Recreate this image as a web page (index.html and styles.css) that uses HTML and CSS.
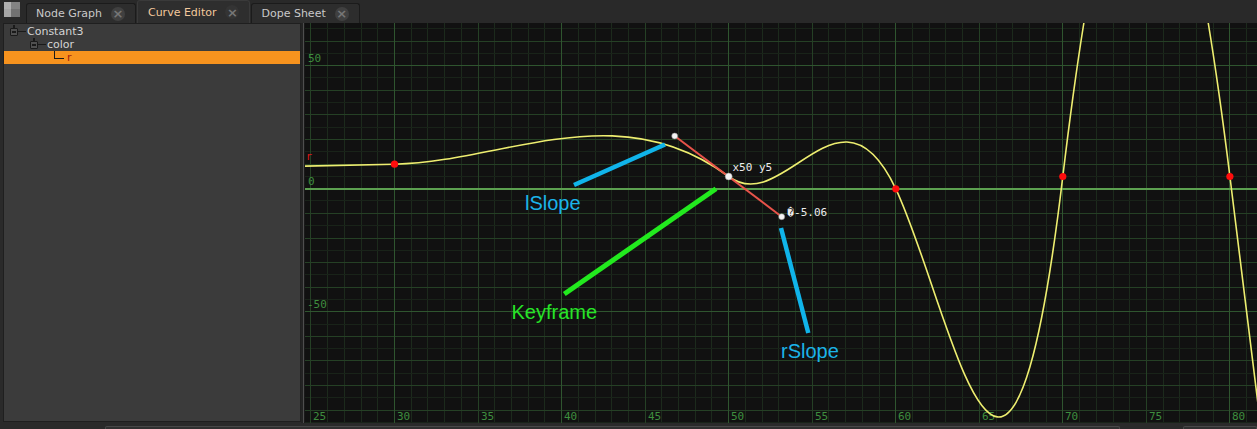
FILE: index.html
```html
<!DOCTYPE html>
<html lang="en">
<head>
<meta charset="UTF-8">
<title>Curve Editor</title>
<link rel="stylesheet" href="styles.css">
</head>
<body>
<div class="app">
    <div class="tabbar">
        <span class="pane-icon"></span>
        <div class="tab">Node Graph<span class="close">&times;</span></div>
        <div class="tab active">Curve Editor<span class="close">&times;</span></div>
        <div class="tab">Dope Sheet<span class="close">&times;</span></div>
    </div>

    <div class="workspace">
        <div class="tree">
            <div class="row l0"><span class="toggle"></span><span class="stem"></span>Constant3</div>
            <div class="row l1"><span class="toggle"></span><span class="stem"></span>color</div>
            <div class="row l2 selected"><span class="branch"></span>r</div>
        </div>
        <div class="splitter"></div>
        <div class="canvas">
            <svg class="graph" width="952" height="400" viewBox="305 23 952 400">
                <!-- grid: 1 frame / 5 value steps -->
                <path class="grid-minor" d="M327.5 23V423M344.5 23V423M361.5 23V423M377.5 23V423M411.5 23V423M427.5 23V423M444.5 23V423M461.5 23V423M494.5 23V423M511.5 23V423M528.5 23V423M544.5 23V423M578.5 23V423M595.5 23V423M611.5 23V423M628.5 23V423M661.5 23V423M678.5 23V423M695.5 23V423M711.5 23V423M745.5 23V423M762.5 23V423M778.5 23V423M795.5 23V423M828.5 23V423M845.5 23V423M862.5 23V423M879.5 23V423M912.5 23V423M929.5 23V423M945.5 23V423M962.5 23V423M996.5 23V423M1012.5 23V423M1029.5 23V423M1046.5 23V423M1079.5 23V423M1096.5 23V423M1113.5 23V423M1129.5 23V423M1163.5 23V423M1179.5 23V423M1196.5 23V423M1213.5 23V423M1246.5 23V423"/>
                <path class="grid-faint" d="M305 28.5H1257M305 53.5H1257M305 77.5H1257M305 102.5H1257M305 127.5H1257M305 151.5H1257M305 176.5H1257M305 200.5H1257M305 225.5H1257M305 250.5H1257M305 274.5H1257M305 299.5H1257M305 324.5H1257M305 348.5H1257M305 373.5H1257M305 397.5H1257M305 422.5H1257"/>
                <path class="grid-mid" d="M310.5 23V423M478.5 23V423M645.5 23V423M812.5 23V423M979.5 23V423M1146.5 23V423M305 41.5H1257M305 90.5H1257M305 114.5H1257M305 139.5H1257M305 164.5H1257M305 213.5H1257M305 238.5H1257M305 262.5H1257M305 287.5H1257M305 336.5H1257M305 360.5H1257M305 385.5H1257M305 410.5H1257"/>
                <path class="grid-major" d="M394.5 23V423M561.5 23V423M728.5 23V423M895.5 23V423M1062.5 23V423M1229.5 23V423M305 65.5H1257M305 311.5H1257"/>
                <path class="zero-line" d="M305 189H1257"/>

                <text class="tick" x="308" y="62">50</text>
                <text class="tick" x="308" y="185">0</text>
                <text class="tick" x="307" y="308">-50</text>
                <text class="tick" x="313" y="420">25</text>
                <text class="tick" x="397" y="420">30</text>
                <text class="tick" x="481" y="420">35</text>
                <text class="tick" x="564" y="420">40</text>
                <text class="tick" x="648" y="420">45</text>
                <text class="tick" x="731" y="420">50</text>
                <text class="tick" x="815" y="420">55</text>
                <text class="tick" x="898" y="420">60</text>
                <text class="tick" x="982" y="420">65</text>
                <text class="tick" x="1065" y="420">70</text>
                <text class="tick" x="1149" y="420">75</text>
                <text class="tick" x="1232" y="420">80</text>
                <text class="curve-name" x="306" y="160">r</text>

                <path class="curve" d="M294.2 166.4L394.5 164.2C505.9 161.7 617.3 94 728.7 176.5C784.4 217.8 840.1 70.9 895.8 188.8C951.5 306.7 1007.2 643.9 1062.8 176.5C1118.6 -290.9 1174.3 -274.4 1229.9 176.5L1263.3 447.1"/>
                <path class="tangent" d="M674.7 136L781.7 216.7"/>

                <path class="pointer slope" d="M574 185L665 144.5"/>
                <path class="pointer key" d="M564.3 294L716 188.7"/>
                <path class="pointer slope" d="M781 228L808.3 333"/>

                <circle class="key" cx="394.5" cy="164.2" r="3.6"/>
                <circle class="key" cx="895.8" cy="188.8" r="3.6"/>
                <circle class="key" cx="1062.8" cy="176.5" r="3.6"/>
                <circle class="key" cx="1229.9" cy="176.5" r="3.6"/>
                <circle class="handle" cx="674.7" cy="136" r="3"/>
                <circle class="handle" cx="728.7" cy="176.5" r="3.5"/>
                <circle class="handle" cx="781.7" cy="216.7" r="3"/>

                <text class="readout" x="732.5" y="171">x50 y5</text>
                <text class="readout" x="787.5" y="215.5">&#xFFFD;-5.06</text>

                <text class="note note-slope" x="525" y="210">lSlope</text>
                <text class="note note-key" x="511.5" y="319">Keyframe</text>
                <text class="note note-slope" x="781" y="358">rSlope</text>
            </svg>
        </div>
    </div>

    <div class="statusbar">
        <span class="slot wide"></span>
        <span class="slot"></span>
    </div>
</div>
</body>
</html>
```

FILE: styles.css
```css
* {
    box-sizing: border-box;
}
body {
    margin: 0;
    background-color: #2a2a2a;
    font-family: "DejaVu Sans", sans-serif;
    overflow: hidden;
}
.app {
    width: 1257px;
    height: 429px;
    display: flex;
    flex-direction: column;
}

/* tabs */
.tabbar {
    height: 23px;
    flex-shrink: 0;
    display: flex;
    align-items: flex-end;
    padding-left: 4px;
    background-color: #292929;
}
.pane-icon {
    align-self: flex-start;
    width: 16px;
    height: 15px;
    margin-top: 2px;
    margin-right: 6px;
    background:
        linear-gradient(180deg, rgba(255, 255, 255, 0.12) 0 50%, transparent 50%),
        linear-gradient(90deg, #a6a6a6 0 7px, #727272 7px);
}
.tab {
    display: flex;
    align-items: center;
    height: 20px;
    padding: 0 10px 0 9px;
    margin-right: 1px;
    background-color: #2d2d2d;
    border: 1px solid #1b1b1b;
    border-bottom: none;
    border-radius: 3px 3px 0 0;
    color: #c9c9c9;
    font-size: 11px;
    white-space: nowrap;
}
.tab.active {
    height: 23px;
    padding-left: 10px;
    background-color: #2e2e2e;
    border-color: #3a3a3a;
    color: #f3c99c;
}
.close {
    display: flex;
    align-items: center;
    justify-content: center;
    width: 14px;
    height: 14px;
    margin-left: 9px;
    border-radius: 50%;
    background-color: #404040;
    color: #767676;
    font-size: 13px;
    font-weight: bold;
    line-height: 1;
}
.tab.active .close {
    background-color: #343434;
}

/* layout */
.workspace {
    display: flex;
    height: 400px;
    flex-shrink: 0;
}
.tree {
    width: 298px;
    height: 399px;
    margin-left: 3px;
    padding-top: 1px;
    background-color: #3b3b3b;
    border: 1px solid #1f1f1f;
}
.row {
    display: flex;
    align-items: center;
    height: 13px;
    font-size: 11px;
    color: #d4d4d4;
    white-space: nowrap;
}
.row.l0 { padding-left: 6px; }
.row.l1 { padding-left: 26px; }
.row.l2 { padding-left: 50px; }
.row.selected {
    background-color: #f7931e;
    color: #a3210f;
}
.toggle {
    position: relative;
    width: 8px;
    height: 8px;
    border: 1px solid #1a1a1a;
    border-radius: 1px;
    background-color: #505050;
}
.toggle::after {
    content: "";
    position: absolute;
    left: 1px;
    right: 1px;
    top: 2px;
    height: 2px;
    background-color: #1a1a1a;
}
.toggle::before {
    content: "";
    position: absolute;
    left: 2px;
    top: -4px;
    width: 2px;
    height: 3px;
    background-color: #1a1a1a;
}
.stem {
    width: 8px;
    height: 1px;
    margin-right: 1px;
    background-color: #1a1a1a;
}
.branch {
    align-self: flex-start;
    width: 10px;
    height: 8px;
    margin-right: 3px;
    border-left: 1px solid #1a1a1a;
    border-bottom: 1px solid #1a1a1a;
}
.splitter {
    width: 4px;
    background: linear-gradient(90deg, #232323 0 2px, #4e4e4e 2px 3px, #1a1a1a 3px);
}
.canvas {
    width: 952px;
    height: 400px;
    background-color: #111111;
    overflow: hidden;
}
.graph {
    display: block;
}

/* graph */
.grid-minor,
.grid-faint,
.grid-mid,
.grid-major,
.zero-line {
    fill: none;
    shape-rendering: crispEdges;
}
.grid-minor { stroke: #1c2a1c; stroke-width: 1; }
.grid-faint { stroke: #192319; stroke-width: 1; }
.grid-mid { stroke: #254025; stroke-width: 1; }
.grid-major { stroke: #2f552f; stroke-width: 1; }
.zero-line { stroke: #5ca050; stroke-width: 2; }
.tick {
    font-family: "DejaVu Sans Mono", monospace;
    font-size: 11px;
    fill: #3e8e3e;
}
.curve-name {
    font-family: "DejaVu Sans Mono", monospace;
    font-size: 10px;
    fill: #e01818;
}
.curve {
    fill: none;
    stroke: #eeee70;
    stroke-width: 1.6;
}
.tangent {
    stroke: #e8534a;
    stroke-width: 2;
}
.pointer {
    fill: none;
}
.pointer.slope { stroke: #10b4ea; stroke-width: 4.5; }
.pointer.key { stroke: #22ea1e; stroke-width: 5; }
.key { fill: #ff0d0d; }
.handle {
    fill: #f4f4f4;
    stroke: #8a8a8a;
    stroke-width: 0.5;
}
.readout {
    font-family: "DejaVu Sans Mono", monospace;
    font-size: 11px;
    fill: #ececec;
}
.note {
    font-family: "Liberation Sans", Arial, sans-serif;
    font-size: 20px;
}
.note-slope { fill: #1bb3e9; }
.note-key { fill: #27e427; }

/* bottom strip */
.statusbar {
    display: flex;
    align-items: flex-end;
    height: 6px;
    padding-left: 105px;
    flex-shrink: 0;
}
.slot {
    flex: 1;
    height: 3px;
    background-color: #303030;
    border: 1px solid #484848;
    border-bottom: none;
    border-radius: 2px 2px 0 0;
}
.slot.wide {
    flex: none;
    width: 1015px;
    margin-right: 63px;
}
```
